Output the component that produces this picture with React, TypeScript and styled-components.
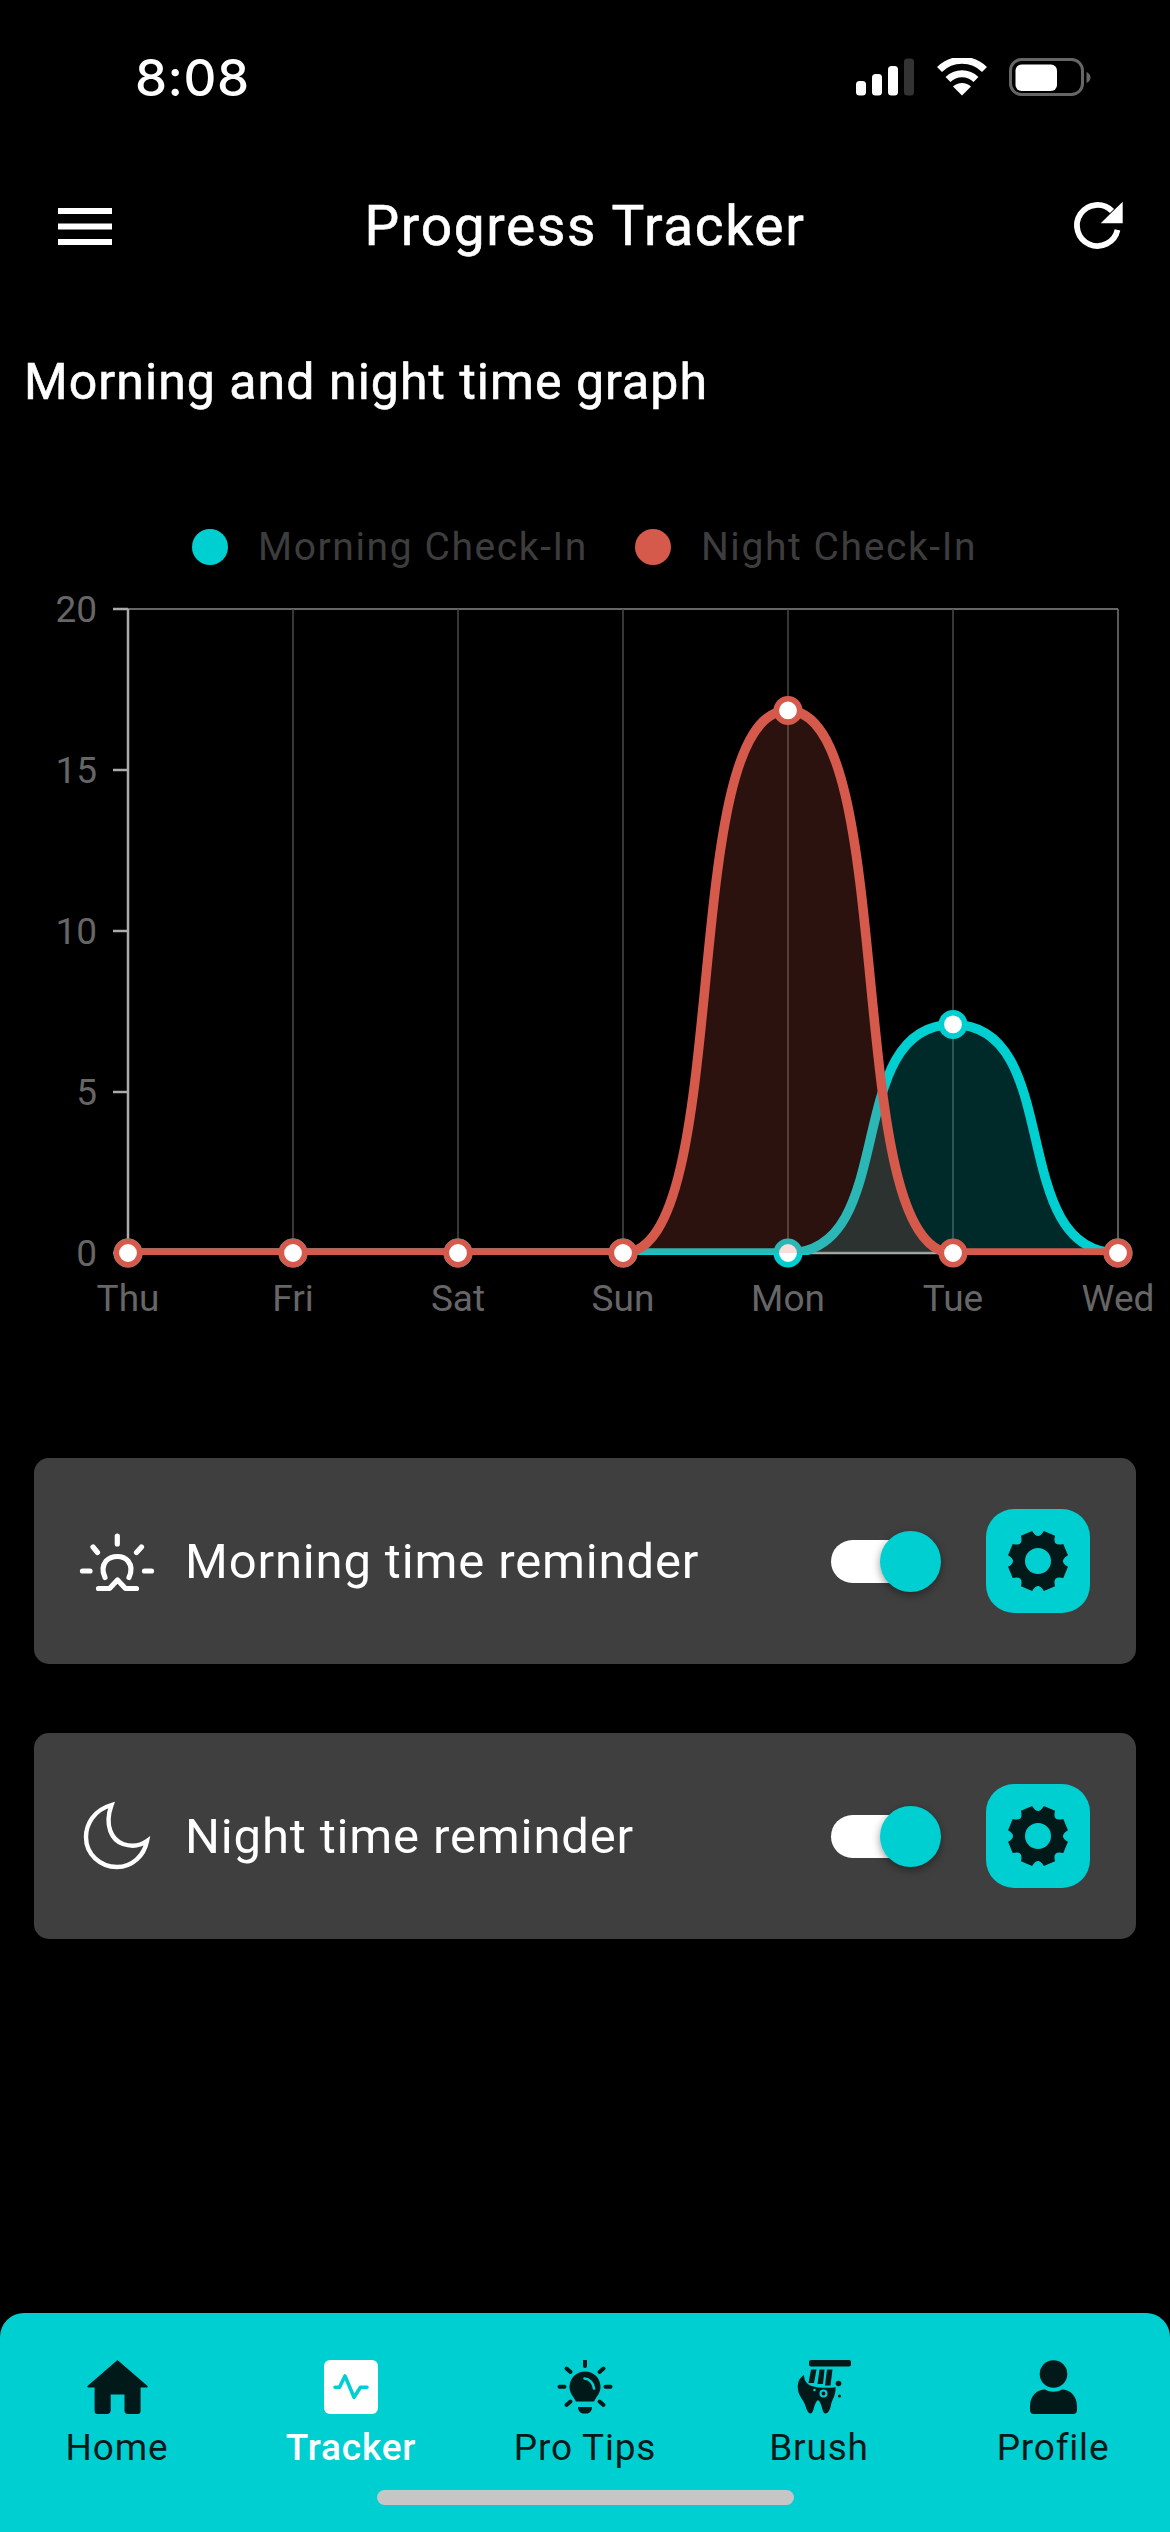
import React from "react";
import styled, { createGlobalStyle } from "styled-components";

const CYAN = "#00cfd1";
const RED = "#d65a4b";
const DARK = "#02191a";

const GlobalStyle = createGlobalStyle`
  html, body {
    margin: 0;
    padding: 0;
    background: #000;
  }
  * {
    box-sizing: border-box;
  }
`;

const Page = styled.div`
  width: 1170px;
  height: 2532px;
  display: flex;
  flex-direction: column;
  background: #000;
  color: #fff;
  font-family: Roboto, "Liberation Sans", sans-serif;
  overflow: hidden;
`;

const StatusBar = styled.div`
  height: 154px;
  display: flex;
  align-items: center;
  justify-content: space-between;
  padding: 0 79px 0 135px;
`;

const Time = styled.span`
  font-family: Inter, Roboto, sans-serif;
  font-size: 51px;
  font-weight: 500;
  letter-spacing: 0.5px;
`;

const StatusIcons = styled.div`
  display: flex;
  align-items: center;
  gap: 22.5px;
`;

const Header = styled.header`
  height: 144px;
  display: grid;
  grid-template-columns: 1fr auto 1fr;
  align-items: center;
  padding: 0 35px;
`;

const HeaderTitle = styled.h1`
  margin: 0;
  font-size: 55px;
  font-weight: 400;
  letter-spacing: 1.7px;
  -webkit-text-stroke: 0.6px #fff;
`;

const HeaderLeft = styled.div`
  display: flex;
  padding-left: 23px;
`;

const HeaderRight = styled.div`
  display: flex;
  justify-content: flex-end;
`;

const SectionTitle = styled.h2`
  height: 168px;
  margin: 0;
  padding-left: 24px;
  display: flex;
  align-items: center;
  font-size: 50px;
  font-weight: 400;
  letter-spacing: 1.05px;
  -webkit-text-stroke: 0.6px #fff;
`;

const Legend = styled.div`
  height: 114px;
  padding: 48px 0 0 192px;
  display: flex;
  align-items: center;
  gap: 47px;
`;

const LegendItem = styled.div`
  display: flex;
  align-items: center;
  gap: 30px;
`;

const LegendDot = styled.span<{ $color: string }>`
  width: 36px;
  height: 36px;
  border-radius: 50%;
  background: ${(p) => p.$color};
`;

const LegendLabel = styled.span`
  font-size: 39px;
  letter-spacing: 1.6px;
  color: #3d3d3d;
`;

const ChartSvg = styled.svg`
  display: block;
  width: 1170px;
  height: 740px;
`;

const AxisText = styled.text`
  font-family: Roboto, "Liberation Sans", sans-serif;
  font-size: 37px;
  fill: #666;
`;

const Cards = styled.div`
  margin-top: 138px;
  padding: 0 34px;
  display: flex;
  flex-direction: column;
  gap: 69px;
`;

const Card = styled.div`
  height: 206px;
  padding: 0 46px 0 36px;
  display: flex;
  align-items: center;
  border-radius: 15px;
  background: #3f3f3f;
`;

const CardLabel = styled.span`
  margin-left: 20px;
  font-size: 49px;
  letter-spacing: 0.85px;
  flex: 1;
`;

const Switch = styled.div`
  position: relative;
  width: 110px;
  height: 61px;
  display: flex;
  align-items: center;
`;

const SwitchTrack = styled.div`
  width: 92px;
  height: 43px;
  border-radius: 22px;
  background: #fff;
`;

const SwitchKnob = styled.div`
  position: absolute;
  top: 0;
  right: 0;
  width: 61px;
  height: 61px;
  border-radius: 50%;
  background: ${CYAN};
  box-shadow: 0 3px 8px rgba(0, 0, 0, 0.4);
`;

const GearButton = styled.div`
  width: 104px;
  height: 104px;
  margin-left: 45px;
  padding-right: 1px;
  display: flex;
  align-items: center;
  justify-content: center;
  border-radius: 28px;
  background: ${CYAN};
`;

const TabBar = styled.nav`
  margin-top: auto;
  height: 219px;
  padding-top: 47px;
  display: flex;
  flex-direction: column;
  align-items: center;
  border-radius: 24px 24px 0 0;
  background: ${CYAN};
`;

const Tabs = styled.div`
  width: 100%;
  display: grid;
  grid-template-columns: repeat(5, 1fr);
`;

const Tab = styled.div<{ $active?: boolean }>`
  display: flex;
  flex-direction: column;
  align-items: center;
  color: ${(p) => (p.$active ? "#fff" : DARK)};
  font-size: 37px;
  letter-spacing: 0.8px;
  font-weight: ${(p) => (p.$active ? 500 : 400)};
  line-height: 42px;
`;

const TabIcon = styled.div`
  height: 54px;
  margin-bottom: 13px;
  display: flex;
  align-items: center;
  justify-content: center;
`;

const HomeBar = styled.div`
  width: 417px;
  height: 15px;
  margin-top: 21px;
  border-radius: 8px;
  background: #c6c6c6;
`;

// chart geometry, measured in page pixels
const DAYS = ["Thu", "Fri", "Sat", "Sun", "Mon", "Tue", "Wed"];
const X0 = 128;
const STEP_X = 165;
const Y0 = 1253;
const Y_TOP = 609;
const UNIT = (Y0 - Y_TOP) / 20;
const MORNING = [0, 0, 0, 0, 0, 7.1, 0];
const NIGHT = [0, 0, 0, 0, 16.85, 0, 0];
const px = (i: number) => X0 + i * STEP_X;
const py = (v: number) => Y0 - v * UNIT;

function curve(values: number[]) {
  const k = STEP_X * 0.68;
  let d = `M${px(0)} ${py(values[0])}`;
  for (let i = 1; i < values.length; i++) {
    d += ` C${px(i - 1) + k} ${py(values[i - 1])} ${px(i) - k} ${py(values[i])} ${px(i)} ${py(values[i])}`;
  }
  return d;
}

const Series = ({ values, color }: { values: number[]; color: string }) => {
  const line = curve(values);
  return (
    <g>
      <path d={`${line} V${Y0} H${X0} Z`} fill={color} fillOpacity={0.2} />
      <path d={line} fill="none" stroke={color} strokeWidth={9.5} clipPath="url(#plot)" />
      {values.map((v, i) => (
        <circle key={i} cx={px(i)} cy={py(v)} r={11.7} fill="#fff" stroke={color} strokeWidth={5.6} />
      ))}
    </g>
  );
};

const Chart = () => (
  <ChartSvg viewBox="0 580 1170 740">
    <defs>
      <clipPath id="plot">
        <rect x="0" y="580" width="1170" height="675" />
      </clipPath>
    </defs>
    <line x1={X0} x2={1118} y1={Y_TOP} y2={Y_TOP} stroke="#666" strokeWidth={2} />
    {DAYS.map((d, i) => (
      <line
        key={d}
        x1={px(i)}
        x2={px(i)}
        y1={Y_TOP}
        y2={Y0}
        stroke={i === 6 ? "#777" : "#4a4a4a"}
        strokeWidth={1.5}
      />
    ))}
    <line x1={X0} x2={X0} y1={Y_TOP} y2={Y0} stroke="#aaa" strokeWidth={2.5} />
    <line x1={X0} x2={1118} y1={Y0} y2={Y0} stroke="#aaa" strokeWidth={2.5} />
    {[0, 5, 10, 15, 20].map((v) => (
      <g key={v}>
        <line x1={113} x2={X0} y1={py(v)} y2={py(v)} stroke="#aaa" strokeWidth={2.5} />
        <AxisText x={97} y={py(v) + 13} textAnchor="end">
          {v}
        </AxisText>
      </g>
    ))}
    {DAYS.map((d, i) => (
      <AxisText key={d} x={px(i)} y={1311} textAnchor="middle">
        {d}
      </AxisText>
    ))}
    <Series values={MORNING} color={CYAN} />
    <Series values={NIGHT} color={RED} />
  </ChartSvg>
);

const SignalIcon = () => (
  <svg width="58" height="38" viewBox="0 0 58 38">
    <rect x="0" y="23" width="10" height="14.5" rx="3.5" fill="#fff" />
    <rect x="16" y="16" width="10" height="21.5" rx="3.5" fill="#fff" />
    <rect x="32" y="8" width="10" height="29.5" rx="3.5" fill="#fff" />
    <rect x="48" y="0.5" width="10" height="37" rx="3.5" fill="#333" />
  </svg>
);

const WifiIcon = () => (
  <svg width="50" height="38" viewBox="0 0 50 38">
    <path d="M2.5 11.5A32 32 0 0 1 47.5 11.5" fill="none" stroke="#fff" strokeWidth={7} />
    <path d="M11 21.5A20 20 0 0 1 39 21.5" fill="none" stroke="#fff" strokeWidth={7} />
    <path d="M25 37.5L16 28.5A13 13 0 0 1 34 28.5Z" fill="#fff" />
  </svg>
);

const BatteryIcon = () => (
  <svg width="82" height="38" viewBox="0 0 82 38">
    <rect x="1.5" y="1.5" width="72" height="35" rx="11" fill="none" stroke="#666" strokeWidth={3} />
    <rect x="6.5" y="6.5" width="41.5" height="26.5" rx="6" fill="#fff" />
    <path d="M77.5 14C80 15 81.5 17 81.5 19.5C81.5 22 80 24 77.5 25Z" fill="#666" />
  </svg>
);

const MenuIcon = () => (
  <svg width="54" height="37" viewBox="0 0 54 37">
    <rect y="0" width="54" height="6" fill="#fff" />
    <rect y="15.5" width="54" height="6" fill="#fff" />
    <rect y="31" width="54" height="6" fill="#fff" />
  </svg>
);

const RefreshIcon = () => (
  <svg width="75" height="70" viewBox="0 0 75 70">
    <path d="M57.5 38.8A20.5 20.5 0 1 1 52 20" fill="none" stroke="#fff" strokeWidth={5.8} />
    <path d="M62.7 10.7V32.3H40.7Z" fill="#fff" />
  </svg>
);

const SunriseIcon = () => (
  <svg width="95" height="80" viewBox="0 0 95 80" fill="none" stroke="#fff" strokeWidth={5.2} strokeLinecap="round" strokeLinejoin="round">
    <path d="M47.3 15V23" />
    <path d="M23 26L27.5 31.5" />
    <path d="M71.5 26L66.5 31.5" />
    <path d="M12.5 50H20" />
    <path d="M74.5 50H81.5" />
    <path d="M35 56.5C32 50 32 45 36 40C42 34 53 34 58 40C62 45 62 50 59 56.5" />
    <path d="M28.5 67.5H39.5L47.5 59L55.5 67.5H66.5" />
  </svg>
);

const MoonIcon = () => (
  <svg width="95" height="80" viewBox="-10 -4 95 80" fill="none" stroke="#fff" strokeWidth={4.4} strokeLinejoin="miter">
    <path d="M31.5 5C14 10 6 24 6 37C6 54 20 67 37 67C52 67 64 56 67 41C60 46 52 47 43 44C32 40 24 26 31.5 5Z" />
  </svg>
);

const toothAngle = Math.PI / 4;
function gearPath(cx: number, cy: number, outer: number, notch: number) {
  let d = "";
  for (let i = 0; i < 8; i++) {
    const mid = -Math.PI / 2 + toothAngle * i + toothAngle / 2;
    const a1 = mid - 0.2;
    const a2 = mid + 0.2;
    const next = mid + toothAngle / 2;
    const nextStart = mid + toothAngle - 0.2;
    const p = (a: number, r: number) => `${(cx + r * Math.cos(a)).toFixed(2)} ${(cy + r * Math.sin(a)).toFixed(2)}`;
    d += i === 0 ? `M${p(a1, outer)}` : `L${p(a1, outer)}`;
    d += `L${p(a2, outer)}`;
    d += `Q${p(next, notch)} ${p(nextStart, outer)}`;
  }
  return d + "Z";
}

const GearIcon = () => (
  <svg width="62" height="62" viewBox="0 0 62 62">
    <path
      fillRule="evenodd"
      fill={DARK}
      d={`${gearPath(31, 31, 30.5, 20)} M31 18A13 13 0 1 0 31 44A13 13 0 1 0 31 18Z`}
    />
  </svg>
);

const HomeIcon = () => (
  <svg width="61" height="54" viewBox="0 0 61 54" fill={DARK}>
    <path d="M30.5 0L60.5 26Q61 27 60 27.5H53.6V51A3 3 0 0 1 50.6 54H41A3.5 3.5 0 0 1 37.5 51V34.5H23.7V51A3.5 3.5 0 0 1 20 54H10.6A3 3 0 0 1 7.6 51V27.5H1Q0 27 0.5 26Z" />
  </svg>
);

const TrackerIcon = () => (
  <svg width="54" height="54" viewBox="0 0 54 54">
    <rect width="54" height="54" rx="6" fill="#fff" />
    <path d="M11 27.3H15.5L21 16L30 37.3L36.5 27.3H43" fill="none" stroke={CYAN} strokeWidth={3.6} strokeLinecap="round" strokeLinejoin="round" />
  </svg>
);

const BulbIcon = () => (
  <svg width="80" height="54" viewBox="0 10 80 54">
    <g stroke={DARK} strokeWidth={4} strokeLinecap="round">
      <path d="M40 11V16" />
      <path d="M21.5 18.5L25.5 22" />
      <path d="M58.5 18.5L54.5 22" />
      <path d="M14.5 36.7H19.5" />
      <path d="M60.5 36.7H65.5" />
      <path d="M21.5 55L25.5 51.5" />
      <path d="M58.5 55L54.5 51.5" />
    </g>
    <path d="M40 21.5C49 21.5 55.5 28.5 55.5 37C55.5 43 51.5 46.5 49 51.5H31C28.5 46.5 24.5 43 24.5 37C24.5 28.5 31 21.5 40 21.5Z" fill={DARK} />
    <path d="M33 57H47C47 61 44.5 63.5 41.5 63.5H38.5C35.5 63.5 33 61 33 57Z" fill={DARK} />
    <path d="M39.5 28.5C44.5 29 48.5 33 49 38.5" fill="none" stroke={CYAN} strokeWidth={2.6} strokeLinecap="round" />
  </svg>
);

const BrushIcon = () => (
  <svg width="90" height="54" viewBox="0 10 90 54" fill={DARK}>
    <rect x="35" y="10" width="42" height="6.5" rx="2" />
    <path d="M37 19.5H42.5L40 33H34.5Z" />
    <path d="M45.5 19.5H50.5L49 34H43.5Z" />
    <path d="M53 19.5H58.5L56.5 35.5H51Z" />
    <path d="M30 25C25 28 23 33 24 40C25 47 30 50 31.5 56C33 61 35 64 37 63.5C40 63 40 52 44 50C48 52 48 63 51 63.5C54 64 56 60 57 55C58 49 62 46 61.5 37C55 38.5 44 38 37.5 36C32.5 34 30 30 30 25Z" />
    <circle cx="64.5" cy="33.5" r="2.8" />
    <circle cx="65.5" cy="46" r="1.5" />
    <circle cx="49.5" cy="43.5" r="3" fill="none" stroke={CYAN} strokeWidth={2.2} />
    <circle cx="40.5" cy="40" r="1.3" fill={CYAN} />
  </svg>
);

const ProfileIcon = () => (
  <svg width="47" height="54" viewBox="0 0 47 54" fill={DARK}>
    <circle cx="23.5" cy="14" r="13.8" />
    <path d="M0 46C0 36 7 29.5 15 29.5C20 32.5 27 32.5 32 29.5C40 29.5 47 36 47 46V50A4 4 0 0 1 43 54H4A4 4 0 0 1 0 50Z" />
  </svg>
);

const ReminderRow = ({ icon, label }: { icon: React.ReactNode; label: string }) => (
  <Card>
    {icon}
    <CardLabel>{label}</CardLabel>
    <Switch>
      <SwitchTrack />
      <SwitchKnob />
    </Switch>
    <GearButton>
      <GearIcon />
    </GearButton>
  </Card>
);

const TABS = [
  { label: "Home", icon: <HomeIcon /> },
  { label: "Tracker", icon: <TrackerIcon />, active: true },
  { label: "Pro Tips", icon: <BulbIcon /> },
  { label: "Brush", icon: <BrushIcon /> },
  { label: "Profile", icon: <ProfileIcon /> },
];

export default function App() {
  return (
    <>
      <GlobalStyle />
      <Page>
        <StatusBar>
          <Time>8:08</Time>
          <StatusIcons>
            <SignalIcon />
            <WifiIcon />
            <BatteryIcon />
          </StatusIcons>
        </StatusBar>
        <Header>
          <HeaderLeft>
            <MenuIcon />
          </HeaderLeft>
          <HeaderTitle>Progress Tracker</HeaderTitle>
          <HeaderRight>
            <RefreshIcon />
          </HeaderRight>
        </Header>
        <SectionTitle>Morning and night time graph</SectionTitle>
        <Legend>
          <LegendItem>
            <LegendDot $color={CYAN} />
            <LegendLabel>Morning Check-In</LegendLabel>
          </LegendItem>
          <LegendItem>
            <LegendDot $color={RED} />
            <LegendLabel>Night Check-In</LegendLabel>
          </LegendItem>
        </Legend>
        <Chart />
        <Cards>
          <ReminderRow icon={<SunriseIcon />} label="Morning time reminder" />
          <ReminderRow icon={<MoonIcon />} label="Night time reminder" />
        </Cards>
        <TabBar>
          <Tabs>
            {TABS.map((t) => (
              <Tab key={t.label} $active={t.active}>
                <TabIcon>{t.icon}</TabIcon>
                {t.label}
              </Tab>
            ))}
          </Tabs>
          <HomeBar />
        </TabBar>
      </Page>
    </>
  );
}
